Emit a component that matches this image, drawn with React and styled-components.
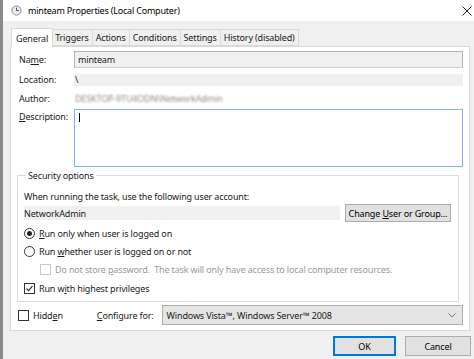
import React from 'react';
import styled, { createGlobalStyle } from 'styled-components';

const GlobalStyle = createGlobalStyle`
  html, body { margin: 0; padding: 0; background: #f0f0f0; }
  body {
    font-family: "Noto Sans", "Open Sans", sans-serif;
    font-size: 9px;
    letter-spacing: -0.15px;
    color: #1a1a1a;
  }
`;

let Window = styled.div`
  width: 474px;
  height: 359px;
  display: flex;
  flex-direction: column;
  border-left: 3px solid #8a8a8a;
  box-sizing: border-box;
  overflow: hidden;
  background: #f0f0f0;
`;

let TitleBar = styled.div`
  height: 21px;
  background: #fff;
  display: flex;
  align-items: center;
  padding-left: 8px;
  gap: 6px;
  font-size: 9px;
  letter-spacing: -0.2px;
  color: #000;
`;

let TitleText = styled.span`
  flex: 1;
`;

let CloseBtn = styled.div`
  width: 10px;
  padding-right: 2px;
  display: flex;
  justify-content: center;
`;

let Body = styled.div`
  flex: 1;
  padding: 6px 1px 0 7px;
  display: flex;
  flex-direction: column;
`;

let TabRow = styled.div`
  display: flex;
  align-items: flex-end;
  height: 19px;
  padding-left: 1px;
`;

let Tab = styled.div`
  height: ${p => (p.active ? '19px' : '17px')};
  padding: 0 ${p => (p.active ? '4px' : '3px')};
  margin: 0 ${p => (p.active ? '-1px' : '0')} ${p => (p.active ? '-1px' : '0')} 0;
  box-sizing: border-box;
  display: flex;
  align-items: center;
  background: ${p => (p.active ? '#fff' : '#f0f0f0')};
  border: 1px solid #d9d9d9;
  border-bottom: ${p => (p.active ? 'none' : '1px solid #d9d9d9')};
  border-left: ${p => (p.first || p.active ? '1px solid #d9d9d9' : 'none')};
  position: relative;
  z-index: ${p => (p.active ? 2 : 1)};
`;

let Panel = styled.div`
  background: #fff;
  border: 1px solid #d9d9d9;
  width: 460px;
  height: 285px;
  box-sizing: border-box;
  padding: 4px 6px 0 8px;
  display: flex;
  flex-direction: column;
`;

let FormRow = styled.div`
  display: grid;
  grid-template-columns: 55px 1fr;
  align-items: ${p => (p.top ? 'start' : 'center')};
  margin-top: ${p => p.gap || 0}px;
`;

let Label = styled.span`
  padding-top: ${p => (p.top ? '1px' : '0')};
`;

let ReadField = styled.div`
  height: 17px;
  box-sizing: border-box;
  background: #f0f0f0;
  border: 1px solid #b4b4b4;
  border-bottom-color: #cfcfcf;
  display: flex;
  align-items: center;
  padding-left: 3px;
`;

let FlatField = styled.div`
  height: 12px;
  background: ${p => (p.plain ? 'transparent' : '#f0f0f0')};
  display: flex;
  align-items: center;
  padding-left: 1px;
`;

let Blurred = styled.span`
  filter: blur(1.3px);
  color: #8a8a8a;
`;

let TextArea = styled.div`
  height: 58px;
  box-sizing: border-box;
  border: 1px solid #7eb4ea;
  padding: 3px 4px;
`;

let Caret = styled.div`
  width: 1px;
  height: 9px;
  background: #000;
`;

let Group = styled.fieldset`
  margin: 2px 4px 0 -2px;
  border: 1px solid #dcdcdc;
  padding: 8px 7px 6px 6px;
  height: 133px;
  box-sizing: border-box;
  display: flex;
  flex-direction: column;
`;

let Legend = styled.legend`
  padding: 0 2px;
  margin-left: 2px;
`;

let AccountRow = styled.div`
  display: flex;
  align-items: center;
  gap: 5px;
  margin-top: 1px;
`;

let AccountField = styled.div`
  flex: 1;
  height: 14px;
  background: #f0f0f0;
  display: flex;
  align-items: center;
`;

let Button = styled.div`
  flex-shrink: 0;
  height: ${p => p.h || 18}px;
  width: ${p => p.w}px;
  box-sizing: border-box;
  background: #e1e1e1;
  border: 1px solid ${p => (p.primary ? '#0078d7' : '#adadad')};
  box-shadow: ${p => (p.primary ? 'inset 0 0 0 1px #0078d7' : 'none')};
  display: flex;
  align-items: center;
  justify-content: center;
  white-space: nowrap;
  color: #000;
`;

let OptionRow = styled.div`
  display: flex;
  align-items: center;
  gap: 4px;
  margin-top: ${p => p.gap || 0}px;
  margin-left: ${p => p.indent || 0}px;
  color: ${p => (p.disabled ? '#9a9a9a' : '#1a1a1a')};
  white-space: nowrap;
`;

let Radio = styled.div`
  width: 9px;
  height: 9px;
  border: 1px solid #333;
  border-radius: 50%;
  display: flex;
  align-items: center;
  justify-content: center;
  &::after {
    content: '';
    width: 5px;
    height: 5px;
    border-radius: 50%;
    background: ${p => (p.checked ? '#222' : 'transparent')};
  }
`;

let Check = styled.div`
  width: 9px;
  height: 9px;
  border: 1px solid ${p => (p.disabled ? '#c8c8c8' : '#333')};
  background: #fff;
  display: flex;
  align-items: center;
  justify-content: center;
`;

let BottomRow = styled.div`
  display: flex;
  align-items: center;
  margin: 3px 0 0 -1px;
`;

let ConfigLabel = styled.span`
  margin-left: 34px;
`;

let Select = styled.div`
  flex: 1;
  height: 20px;
  box-sizing: border-box;
  background: #e5e5e5;
  border: 1px solid #acacac;
  display: flex;
  align-items: center;
  padding: 0 6px 0 4px;
  margin-left: 8px;
`;

let SelectText = styled.span`
  flex: 1;
`;

let Footer = styled.div`
  display: flex;
  justify-content: flex-end;
  gap: 9px;
  padding: 5px 2px 0 0;
`;

let U = styled.span`
  text-decoration: underline;
`;

function ClockIcon() {
  return (
    <svg width="11" height="11" viewBox="0 0 11 11">
      <circle cx="5.5" cy="5.5" r="4.6" fill="#ececec" stroke="#8a8a8a" strokeWidth="1" />
      <path d="M5.5 2.6 V5.6 H7.8" fill="none" stroke="#555" strokeWidth="1" />
    </svg>
  );
}

function CloseIcon() {
  return (
    <svg width="10" height="10" viewBox="0 0 10 10">
      <path d="M0.5 0.5 L9.5 9.5 M9.5 0.5 L0.5 9.5" stroke="#222" strokeWidth="1" />
    </svg>
  );
}

function Tick() {
  return (
    <svg width="7" height="7" viewBox="0 0 7 7">
      <path d="M0.6 3.6 L2.6 5.6 L6.4 1.2" fill="none" stroke="#222" strokeWidth="1.1" />
    </svg>
  );
}

function Chevron() {
  return (
    <svg width="8" height="5" viewBox="0 0 8 5">
      <path d="M0.5 0.5 L4 4 L7.5 0.5" fill="none" stroke="#777" strokeWidth="1" />
    </svg>
  );
}

const tabs = ['General', 'Triggers', 'Actions', 'Conditions', 'Settings', 'History (disabled)'];

export default function App() {
  return (
    <Window>
      <GlobalStyle />
      <TitleBar>
        <ClockIcon />
        <TitleText>minteam Properties (Local Computer)</TitleText>
        <CloseBtn><CloseIcon /></CloseBtn>
      </TitleBar>
      <Body>
        <TabRow>
          {tabs.map((t, i) => (
            <Tab key={t} active={i === 0} first={i === 0}>{t}</Tab>
          ))}
        </TabRow>
        <Panel>
          <FormRow>
            <Label>Na<U>m</U>e:</Label>
            <ReadField>minteam</ReadField>
          </FormRow>
          <FormRow gap={5}>
            <Label>Location:</Label>
            <FlatField>\</FlatField>
          </FormRow>
          <FormRow gap={6}>
            <Label>Author:</Label>
            <FlatField plain><Blurred>DESKTOP-9TU4ODN\NetworkAdmin</Blurred></FlatField>
          </FormRow>
          <FormRow gap={4} top>
            <Label top><U>D</U>escription:</Label>
            <TextArea><Caret /></TextArea>
          </FormRow>
          <Group>
            <Legend>Security options</Legend>
            <span>When running the task, use the following user account:</span>
            <AccountRow>
              <AccountField>NetworkAdmin</AccountField>
              <Button w={106}><span>Change <U>U</U>ser or Group...</span></Button>
            </AccountRow>
            <OptionRow gap={5}>
              <Radio checked />
              <span><U>R</U>un only when user is logged on</span>
            </OptionRow>
            <OptionRow gap={5}>
              <Radio />
              <span>Run <U>w</U>hether user is logged on or not</span>
            </OptionRow>
            <OptionRow gap={5} indent={16} disabled>
              <Check disabled />
              <span>Do not store <U>p</U>assword.&nbsp; The task will only have access to local computer resources.</span>
            </OptionRow>
            <OptionRow gap={6}>
              <Check><Tick /></Check>
              <span>Run w<U>i</U>th highest privileges</span>
            </OptionRow>
          </Group>
          <BottomRow>
            <OptionRow>
              <Check />
              <span>Hidd<U>e</U>n</span>
            </OptionRow>
            <ConfigLabel><U>C</U>onfigure for:</ConfigLabel>
            <Select>
              <SelectText>Windows Vista™, Windows Server™ 2008</SelectText>
              <Chevron />
            </Select>
          </BottomRow>
        </Panel>
        <Footer>
          <Button w={63} h={20} primary>OK</Button>
          <Button w={66} h={20}>Cancel</Button>
        </Footer>
      </Body>
    </Window>
  );
}
